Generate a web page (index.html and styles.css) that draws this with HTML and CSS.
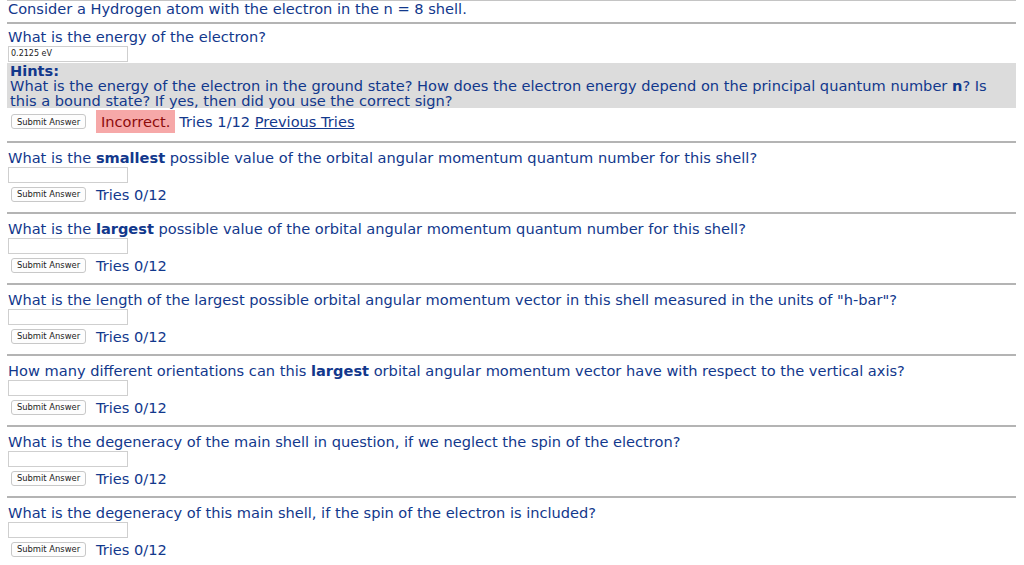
FILE: index.html
```html
<!DOCTYPE html>
<html>
<head>
<meta charset="utf-8">
<link rel="stylesheet" href="styles.css">
</head>
<body>
<div class="page">
  <div class="intro">Consider a Hydrogen atom with the electron in the n = 8 shell.</div>

  <div class="part first">
    <div class="question">What is the energy of the electron?</div>
    <div class="answer filled">0.2125 eV</div>
    <div class="hints">
      <div class="hints-title">Hints:</div>
      <div>What is the energy of the electron in the ground state? How does the electron energy depend on the principal quantum number <b>n</b>? Is this a bound state? If yes, then did you use the correct sign?</div>
    </div>
    <div class="submit-row">
      <span class="btn">Submit Answer</span>
      <span class="incorrect">Incorrect.</span>
      <span class="tries">Tries 1/12 <a class="prev">Previous Tries</a></span>
    </div>
  </div>

  <div class="part">
    <div class="question">What is the <b>smallest</b> possible value of the orbital angular momentum quantum number for this shell?</div>
    <div class="answer"></div>
    <div class="submit-row"><span class="btn">Submit Answer</span><span class="tries">Tries 0/12</span></div>
  </div>

  <div class="part">
    <div class="question">What is the <b>largest</b> possible value of the orbital angular momentum quantum number for this shell?</div>
    <div class="answer"></div>
    <div class="submit-row"><span class="btn">Submit Answer</span><span class="tries">Tries 0/12</span></div>
  </div>

  <div class="part">
    <div class="question">What is the length of the largest possible orbital angular momentum vector in this shell measured in the units of "h-bar"?</div>
    <div class="answer"></div>
    <div class="submit-row"><span class="btn">Submit Answer</span><span class="tries">Tries 0/12</span></div>
  </div>

  <div class="part">
    <div class="question">How many different orientations can this <b>largest</b> orbital angular momentum vector have with respect to the vertical axis?</div>
    <div class="answer"></div>
    <div class="submit-row"><span class="btn">Submit Answer</span><span class="tries">Tries 0/12</span></div>
  </div>

  <div class="part">
    <div class="question">What is the degeneracy of the main shell in question, if we neglect the spin of the electron?</div>
    <div class="answer"></div>
    <div class="submit-row"><span class="btn">Submit Answer</span><span class="tries">Tries 0/12</span></div>
  </div>

  <div class="part">
    <div class="question">What is the degeneracy of this main shell, if the spin of the electron is included?</div>
    <div class="answer"></div>
    <div class="submit-row"><span class="btn">Submit Answer</span><span class="tries">Tries 0/12</span></div>
  </div>
</div>
</body>
</html>
```

FILE: styles.css
```css
html, body {
  margin: 0;
  padding: 0;
  background: #ffffff;
}

body {
  font-family: "DejaVu Sans", Verdana, sans-serif;
  font-size: 14.6px;
  color: #12388c;
}

.page {
  width: 1009px;
  margin-left: 7px;
  border-top: 1px solid #c4c4c4;
}

.intro {
  line-height: 16px;
  padding-left: 1px;
  padding-bottom: 5px;
}

.part {
  border-top: 2px solid #b4b4b4;
  padding-top: 6px;
  padding-bottom: 8px;
}

.part.first {
  padding-top: 4px;
  padding-bottom: 8px;
}

.question {
  line-height: 18px;
  padding-left: 1px;
}

.answer {
  width: 116px;
  height: 14px;
  margin-left: 1px;
  border: 1px solid #cfcfcf;
  font-size: 8px;
  line-height: 14px;
  color: #222;
  padding-left: 2px;
  box-sizing: content-box;
}

.hints {
  background: #dcdcdc;
  margin-top: 1px;
  padding: 0 3px;
  line-height: 15px;
}

.hints-title {
  font-weight: bold;
}

.hints b {
  font-weight: bold;
}

.submit-row {
  display: flex;
  align-items: center;
  gap: 10px;
  margin-top: 1px;
  height: 20px;
  padding-left: 4px;
}

.first .submit-row {
  margin-top: 2px;
  height: 23px;
}

.btn {
  display: inline-flex;
  align-items: center;
  justify-content: center;
  width: 73px;
  height: 13px;
  border: 1px solid #c8c8c8;
  border-radius: 3px;
  background: #fdfdfd;
  color: #222;
  font-size: 8.4px;
  font-family: "DejaVu Sans", Verdana, sans-serif;
}

.incorrect {
  background: #f6a8a8;
  color: #8c0b0b;
  padding: 0 5px;
  height: 23px;
  line-height: 23px;
  margin-right: -6px;
}

.tries {
  white-space: nowrap;
}

.prev {
  text-decoration: underline;
  color: #12388c;
}
```
